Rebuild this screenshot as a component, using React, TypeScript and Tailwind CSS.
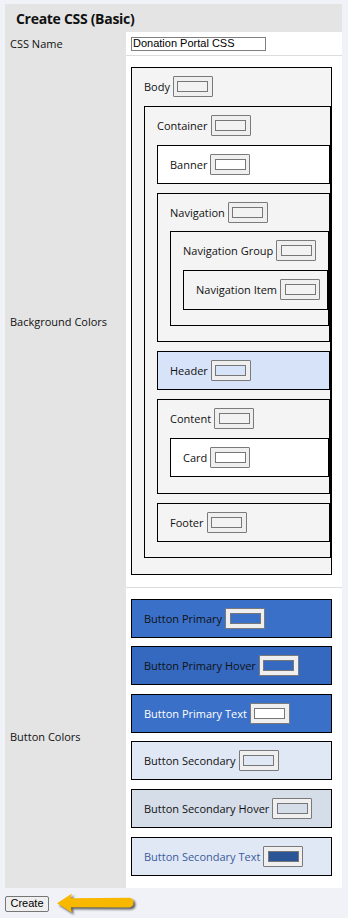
import React from 'react';

type Node = {
  label: string;
  bg: string;
  swatch: string;
  children?: Node[];
};

const tree: Node = {
  label: 'Body',
  bg: '#f4f4f4',
  swatch: '#f2f2f2',
  children: [
    {
      label: 'Container',
      bg: '#f4f4f4',
      swatch: '#f2f2f2',
      children: [
        { label: 'Banner', bg: '#ffffff', swatch: '#ffffff' },
        {
          label: 'Navigation',
          bg: '#f4f4f4',
          swatch: '#f2f2f2',
          children: [
            {
              label: 'Navigation Group',
              bg: '#f4f4f4',
              swatch: '#f2f2f2',
              children: [{ label: 'Navigation Item', bg: '#f4f4f4', swatch: '#f2f2f2' }],
            },
          ],
        },
        { label: 'Header', bg: '#d6e3f8', swatch: '#d6e3f8' },
        {
          label: 'Content',
          bg: '#f4f4f4',
          swatch: '#f2f2f2',
          children: [{ label: 'Card', bg: '#ffffff', swatch: '#ffffff' }],
        },
        { label: 'Footer', bg: '#f4f4f4', swatch: '#f2f2f2' },
      ],
    },
  ],
};

const buttons = [
  { label: 'Button Primary', bg: '#3a70c8', text: '#111111', swatch: '#3a70c8' },
  { label: 'Button Primary Hover', bg: '#3569bf', text: '#111111', swatch: '#3569bf' },
  { label: 'Button Primary Text', bg: '#3a70c8', text: '#ffffff', swatch: '#ffffff' },
  { label: 'Button Secondary', bg: '#e1e8f5', text: '#111111', swatch: '#e1e8f5' },
  { label: 'Button Secondary Hover', bg: '#d5dde9', text: '#111111', swatch: '#d5dde9' },
  { label: 'Button Secondary Text', bg: '#e1e8f5', text: '#3a5b9c', swatch: '#2c5597' },
];

function Swatch({ color }: { color: string }) {
  return (
    <div className="w-[40px] h-[21px] border border-[#7a7a7a] bg-[#efefef] rounded-[1px] flex items-center justify-center shrink-0">
      <div className="w-[31px] h-[11px] border border-[#777777]" style={{ backgroundColor: color }} />
    </div>
  );
}

function LabelRow({ label, color, text }: { label: string; color: string; text?: string }) {
  return (
    <div className="flex items-center gap-[3px] h-[21px]">
      <span className="leading-none" style={{ color: text || '#111111' }}>{label}</span>
      <Swatch color={color} />
    </div>
  );
}

// nested preview boxes: right edge sits on the parent's inner edge
function Box({ node }: { node: Node }) {
  const hasKids = !!node.children?.length;
  return (
    <div
      className={`border border-black pl-[12px] pt-[8px] flex flex-col gap-[8.8px] ${hasKids ? 'pb-[15.4px]' : 'pb-[8.3px]'}`}
      style={{ backgroundColor: node.bg }}
    >
      <LabelRow label={node.label} color={node.swatch} />
      {node.children?.map((child) => (
        <Box key={child.label} node={child} />
      ))}
    </div>
  );
}

function Arrow() {
  const d = 'M2 12.3 L17 2.5 Q16 5 16 7.2 L74 6.7 Q78.5 7 78.5 11.5 Q78.5 16 74 16.5 L16 16.2 Q16 19 17 21.7 Z';
  return (
    <svg width="84" height="26" viewBox="0 0 84 26" className="shrink-0">
      <defs>
        <filter id="arrowShadow" x="-10%" y="-30%" width="130%" height="170%">
          <feGaussianBlur stdDeviation="1" />
        </filter>
      </defs>
      <path d={d} fill="#2b2b2b" opacity="0.75" transform="translate(2 2)" filter="url(#arrowShadow)" />
      <path d={d} fill="#f8b800" />
    </svg>
  );
}

export default function App() {
  return (
    <div
      className="min-h-[918px] bg-[#f0f2f8] pt-[4px] pl-[5px] text-[11px] text-[#111111]"
      style={{ fontFamily: '"Open Sans", "Noto Sans", sans-serif' }}
    >
      <div className="w-[337px]">
        <div className="h-[28px] bg-[#e4e4e4] flex items-center pl-[11px]">
          <h1 className="text-[14px] font-bold tracking-[-0.3px] text-[#111111]">Create CSS (Basic)</h1>
        </div>

        <div className="flex">
          <div className="w-[121px] bg-[#e4e4e4] flex items-center pl-[5px]">CSS Name</div>
          <div className="flex-1 bg-white border-b border-[#dcdcdc] h-[24px] flex items-center pl-[5px]">
            <div
              className="w-[135px] h-[14px] border border-[#808080] bg-white flex items-center pl-[1px] text-[11px] text-black leading-none"
              style={{ fontFamily: '"Liberation Sans", Arial, sans-serif' }}
            >
              Donation Portal CSS
            </div>
          </div>
        </div>

        <div className="flex">
          <div className="w-[121px] bg-[#e4e4e4] flex items-center pl-[5px]">Background Colors</div>
          <div className="flex-1 bg-white border-b border-[#dcdcdc] pl-[5px] pr-[10px] pt-[11px] pb-[12px]">
            <Box node={tree} />
          </div>
        </div>

        <div className="flex">
          <div className="w-[121px] bg-[#e4e4e4] flex items-center pl-[5px]">Button Colors</div>
          <div className="flex-1 bg-white pl-[5px] pr-[10px] pt-[11px] pb-[12px] flex flex-col gap-[8.6px]">
            {buttons.map((b) => (
              <div
                key={b.label}
                className="border border-black pl-[12px] pt-[8px] pb-[8px]"
                style={{ backgroundColor: b.bg }}
              >
                <LabelRow label={b.label} color={b.swatch} text={b.text} />
              </div>
            ))}
          </div>
        </div>
      </div>

      <div className="flex items-center gap-[6px] mt-[3px]">
        <button
          className="w-[44px] h-[16px] border border-[#767676] bg-[#efefef] rounded-[2px] text-[11px] text-black leading-none flex items-center justify-center"
          style={{ fontFamily: '"Liberation Sans", Arial, sans-serif' }}
        >
          Create
        </button>
        <Arrow />
      </div>
    </div>
  );
}
